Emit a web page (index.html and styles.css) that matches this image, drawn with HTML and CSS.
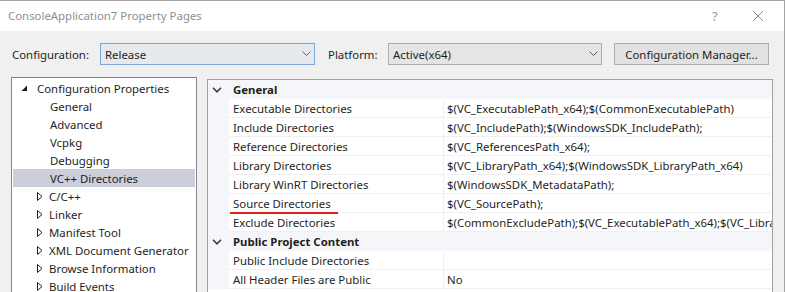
FILE: index.html
```html
<!DOCTYPE html>
<html>
<head>
<meta charset="utf-8">
<link rel="stylesheet" href="styles.css">
</head>
<body>
<div class="window">
  <div class="titlebar">
    <span class="title">ConsoleApplication7 Property Pages</span>
    <span class="help">?</span>
    <svg class="close" width="12" height="12" viewBox="0 0 12 12"><path d="M1 1 L11 11 M11 1 L1 11" stroke="#8c8c8c" stroke-width="1" fill="none"/></svg>
  </div>
  <div class="body">
    <div class="toolbar">
      <span class="lbl cfg-lbl">Configuration:</span>
      <div class="combo focused"><span>Release</span><svg class="chev" width="9" height="6" viewBox="0 0 9 6"><path d="M0.5 0.5 L4.5 4.5 L8.5 0.5" stroke="#606060" fill="none"/></svg></div>
      <span class="lbl plat-lbl">Platform:</span>
      <div class="combo plat"><span>Active(x64)</span><svg class="chev" width="9" height="6" viewBox="0 0 9 6"><path d="M0.5 0.5 L4.5 4.5 L8.5 0.5" stroke="#606060" fill="none"/></svg></div>
      <div class="btn">Configuration Manager...</div>
    </div>
    <div class="main">
      <div class="tree">
        <div class="node root"><svg class="tri" width="7" height="7" viewBox="0 0 7 7"><path d="M6 0.5 L6 6 L0.5 6 Z" fill="#1e1e1e"/></svg><span>Configuration Properties</span></div>
        <div class="node leaf">General</div>
        <div class="node leaf">Advanced</div>
        <div class="node leaf">Vcpkg</div>
        <div class="node leaf">Debugging</div>
        <div class="node leaf selected">VC++ Directories</div>
        <div class="node closed"><svg class="tri2" width="6" height="9" viewBox="0 0 6 9"><path d="M0.5 0.5 L5 4.5 L0.5 8.5 Z" fill="none" stroke="#1e1e1e"/></svg><span>C/C++</span></div>
        <div class="node closed"><svg class="tri2" width="6" height="9" viewBox="0 0 6 9"><path d="M0.5 0.5 L5 4.5 L0.5 8.5 Z" fill="none" stroke="#1e1e1e"/></svg><span>Linker</span></div>
        <div class="node closed"><svg class="tri2" width="6" height="9" viewBox="0 0 6 9"><path d="M0.5 0.5 L5 4.5 L0.5 8.5 Z" fill="none" stroke="#1e1e1e"/></svg><span>Manifest Tool</span></div>
        <div class="node closed"><svg class="tri2" width="6" height="9" viewBox="0 0 6 9"><path d="M0.5 0.5 L5 4.5 L0.5 8.5 Z" fill="none" stroke="#1e1e1e"/></svg><span>XML Document Generator</span></div>
        <div class="node closed"><svg class="tri2" width="6" height="9" viewBox="0 0 6 9"><path d="M0.5 0.5 L5 4.5 L0.5 8.5 Z" fill="none" stroke="#1e1e1e"/></svg><span>Browse Information</span></div>
        <div class="node closed"><svg class="tri2" width="6" height="9" viewBox="0 0 6 9"><path d="M0.5 0.5 L5 4.5 L0.5 8.5 Z" fill="none" stroke="#1e1e1e"/></svg><span>Build Events</span></div>
      </div>
      <div class="grid">
        <div class="row head"><div class="gut"><svg width="10" height="6" viewBox="0 0 10 6"><path d="M1 0.8 L5 4.8 L9 0.8" stroke="#3c3c3c" stroke-width="1.6" fill="none"/></svg></div><div class="hcell">General</div></div>
        <div class="row"><div class="gut"></div><div class="k">Executable Directories</div><div class="v">$(VC_ExecutablePath_x64);$(CommonExecutablePath)</div></div>
        <div class="row"><div class="gut"></div><div class="k">Include Directories</div><div class="v">$(VC_IncludePath);$(WindowsSDK_IncludePath);</div></div>
        <div class="row"><div class="gut"></div><div class="k">Reference Directories</div><div class="v">$(VC_ReferencesPath_x64);</div></div>
        <div class="row"><div class="gut"></div><div class="k">Library Directories</div><div class="v">$(VC_LibraryPath_x64);$(WindowsSDK_LibraryPath_x64)</div></div>
        <div class="row"><div class="gut"></div><div class="k">Library WinRT Directories</div><div class="v">$(WindowsSDK_MetadataPath);</div></div>
        <div class="row"><div class="gut"></div><div class="k"><span class="mark">Source Directories</span></div><div class="v">$(VC_SourcePath);</div></div>
        <div class="row"><div class="gut"></div><div class="k">Exclude Directories</div><div class="v">$(CommonExcludePath);$(VC_ExecutablePath_x64);$(VC_LibraryPath_x64)</div></div>
        <div class="row head"><div class="gut"><svg width="10" height="6" viewBox="0 0 10 6"><path d="M1 0.8 L5 4.8 L9 0.8" stroke="#3c3c3c" stroke-width="1.6" fill="none"/></svg></div><div class="hcell">Public Project Content</div></div>
        <div class="row"><div class="gut"></div><div class="k">Public Include Directories</div><div class="v"></div></div>
        <div class="row"><div class="gut"></div><div class="k">All Header Files are Public</div><div class="v">No</div></div>
      </div>
    </div>
  </div>
</div>
</body>
</html>
```

FILE: styles.css
```css
* { box-sizing: border-box; }
html, body { margin: 0; padding: 0; }
body {
  font-family: "Noto Sans", "Open Sans", sans-serif;
  font-size: 11.4px;
  color: #1e1e1e;
  background: #f0f0f0;
}
.window {
  width: 785px;
  height: 292px;
  overflow: hidden;
  border-top: 1px solid #a5a5a5;
  border-right: 1px solid #a5a5a5;
  background: #f0f0f0;
}
.titlebar {
  height: 30px;
  background: #ffffff;
  display: flex;
  align-items: center;
  padding-left: 8px;
}
.title {
  color: #8f8f8f;
  flex: 1;
  margin-top: -1px;
}
.help {
  color: #9a9a9a;
  width: 14px;
  margin-right: 26px;
  font-size: 13px;
}
.close { margin-right: 20px; }
.body { padding-top: 12px; }
.toolbar {
  display: flex;
  align-items: center;
  height: 22px;
  padding-left: 12px;
}
.lbl { white-space: nowrap; }
.cfg-lbl { width: 88px; }
.plat-lbl { width: 73px; padding-left: 13px; }
.combo {
  height: 22px;
  display: flex;
  align-items: center;
  justify-content: space-between;
  padding: 0 3px 0 4px;
  border: 1px solid #acacac;
  background: #e5e5e5;
}
.combo.focused {
  width: 215px;
  border-color: #7aa7d8;
  background: #e6e9ee;
}
.combo.plat { width: 214px; }
.btn {
  margin-left: 12px;
  width: 155px;
  height: 22px;
  border: 1px solid #adadad;
  background: #e1e1e1;
  display: flex;
  align-items: center;
  justify-content: center;
}
.main {
  display: flex;
  align-items: flex-start;
  margin-top: 12px;
  padding-left: 11px;
  gap: 10px;
}
.tree {
  width: 186px;
  height: 230px;
  background: #ffffff;
  border: 1px solid #828790;
  padding: 1px;
}
.node {
  height: 18px;
  display: flex;
  align-items: center;
  white-space: nowrap;
}
.node.root { padding-left: 8px; }
.node.root .tri { margin-right: 9px; margin-top: 1px; }
.node.leaf { padding-left: 37px; }
.node.selected { background: #cccedb; }
.node.closed { padding-left: 24px; }
.node.closed .tri2 { margin-right: 6px; margin-top: 1px; }
.grid {
  margin-top: 2px;
  width: 566px;
  height: 220px;
  border: 1px solid #a0a0a0;
  background: #ffffff;
}
.row {
  display: grid;
  grid-template-columns: 21px 215px 1fr;
  height: 19px;
}
.row.head { background: #f5f6f9; }
.gut {
  background: #f5f6f9;
  display: flex;
  align-items: center;
  justify-content: center;
}
.gut svg { margin-left: -3px; margin-top: 1px; }
.hcell {
  grid-column: 2 / 4;
  font-weight: bold;
  padding-left: 4px;
  display: flex;
  align-items: center;
  border-bottom: 1px solid #f5f6f9;
}
.k, .v {
  display: flex;
  align-items: center;
  border-bottom: 1px solid #f0f0f0;
  white-space: nowrap;
}
.k {
  padding-left: 4px;
  border-right: 1px solid #f0f0f0;
}
.v { padding-left: 3px; overflow: hidden; }
.mark { position: relative; }
.mark::after {
  content: "";
  position: absolute;
  z-index: 2;
  left: -3px;
  right: -7px;
  bottom: -3px;
  height: 2px;
  background: #e0201e;
}
```
